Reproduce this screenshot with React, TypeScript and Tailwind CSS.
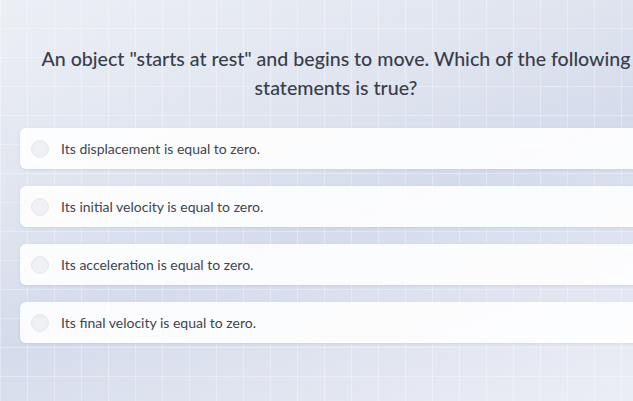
const options = [
  "Its displacement is equal to zero.",
  "Its initial velocity is equal to zero.",
  "Its acceleration is equal to zero.",
  "Its final velocity is equal to zero.",
];

export default function App() {
  return (
    <div className="relative h-[401px] w-full overflow-hidden bg-[linear-gradient(160deg,#eceff5_0%,#dfe4ef_35%,#d4dbeb_55%,#e2e6f1_80%,#eceef5_100%)] font-['Lato','Noto_Sans',sans-serif]">
      <div className="absolute inset-0 bg-[linear-gradient(90deg,rgba(255,255,255,0.3)_1px,transparent_1px),linear-gradient(0deg,rgba(255,255,255,0.3)_1px,transparent_1px)] bg-[length:27px_29px]" />
      <div className="relative w-[652px] pl-[20px] pt-[44px]">
        <h1 className="text-center text-[19.6px] font-medium leading-[29px] text-[#383d49]">
          An object "starts at rest" and begins to move. Which of the following
          statements is true?
        </h1>
        <div className="mt-[26px] flex flex-col gap-[17px]">
          {options.map((option) => (
            <div
              key={option}
              className="flex h-[41px] items-center rounded-md bg-white/90 pl-[11px] shadow-[0_1px_3px_rgba(100,110,140,0.15)]"
            >
              <span className="h-[18px] w-[18px] shrink-0 rounded-full border border-[#e6e8ee] bg-[#eef0f4]" />
              <span className="ml-[12px] text-[14px] text-[#3f444e]">
                {option}
              </span>
            </div>
          ))}
        </div>
      </div>
    </div>
  );
}
